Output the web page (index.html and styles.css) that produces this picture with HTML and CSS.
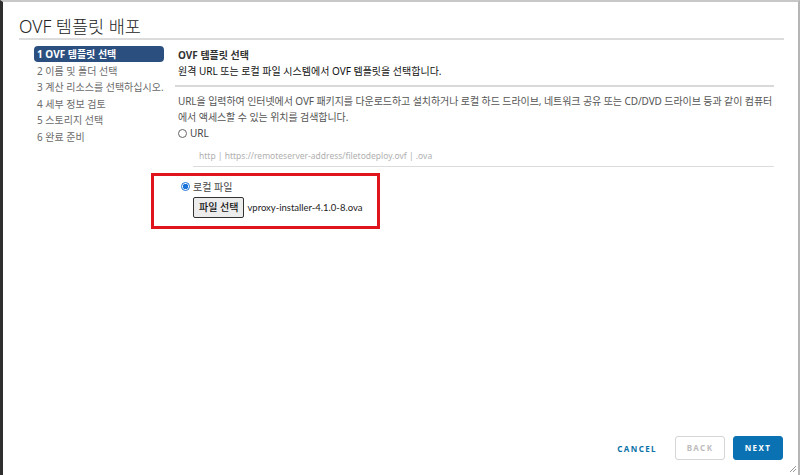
FILE: index.html
```html
<!DOCTYPE html>
<html lang="ko">
<head>
<meta charset="utf-8">
<link rel="stylesheet" href="styles.css">
</head>
<body>
<div class="screen">
  <div class="modal">
    <div class="header">
      <h1 class="title">OVF 템플릿 배포</h1>
    </div>
    <div class="main">
      <ul class="steps">
        <li class="step active">1 OVF 템플릿 선택</li>
        <li class="step">2 이름 및 폴더 선택</li>
        <li class="step">3 계산 리소스를 선택하십시오.</li>
        <li class="step">4 세부 정보 검토</li>
        <li class="step">5 스토리지 선택</li>
        <li class="step">6 완료 준비</li>
      </ul>
      <div class="content">
        <div class="intro">
          <div class="intro-title">OVF 템플릿 선택</div>
          <div class="intro-sub">원격 URL 또는 로컬 파일 시스템에서 OVF 템플릿을 선택합니다.</div>
        </div>
        <p class="desc">URL을 입력하여 인터넷에서 OVF 패키지를 다운로드하고 설치하거나 로컬 하드 드라이브, 네트워크 공유 또는 CD/DVD 드라이브 등과 같이 컴퓨터에서 액세스할 수 있는 위치를 검색합니다.</p>
        <label class="radio-row"><span class="radio"></span>URL</label>
        <div class="url-input">http | https://remoteserver-address/filetodeploy.ovf | .ova</div>
        <div class="highlight">
          <label class="radio-row local"><span class="radio checked"></span>로컬 파일</label>
          <div class="file-row">
            <span class="file-btn">파일 선택</span>
            <span class="file-name">vproxy-installer-4.1.0-8.ova</span>
          </div>
        </div>
      </div>
    </div>
    <div class="footer">
      <span class="btn-link">CANCEL</span>
      <span class="btn btn-outline">BACK</span>
      <span class="btn btn-primary">NEXT</span>
    </div>
    <div class="resize"></div>
  </div>
</div>
</body>
</html>
```
FILE: styles.css
```css
* { box-sizing: border-box; }
html, body { margin: 0; padding: 0; }
body {
  width: 800px;
  height: 475px;
  overflow: hidden;
  background: #fff;
  font-family: "Noto Sans", "Noto Sans CJK KR", sans-serif;
  color: #333;
}
.screen {
  width: 800px;
  height: 475px;
  border-left: 3px solid #2e2e2e;
  border-top: 2px solid #c8c8c8;
  border-right: 2px solid #b5b5b5;
  background: #fff;
}
.modal {
  position: relative;
  height: 100%;
  display: flex;
  flex-direction: column;
}
.header {
  margin: 0 14px 0 16px;
  border-bottom: 2px solid #dcdcdc;
  height: 38px;
  display: flex;
  align-items: flex-end;
  padding-bottom: 1px;
}
.title {
  margin: 0;
  font-size: 17.5px;
  font-weight: 300;
  line-height: 22px;
  color: #222;
}
.main {
  flex: 1;
  display: flex;
  padding-top: 6px;
}
.steps {
  list-style: none;
  margin: 0;
  padding: 0;
  margin-left: 31px;
  width: 130px;
}
.step {
  height: 16.5px;
  line-height: 16px;
  font-size: 10px;
  color: #6a6a6a;
  padding-left: 3px;
  white-space: nowrap;
}
.step.active {
  background: #2b4f7e;
  color: #fff;
  font-weight: 700;
  border-radius: 4px;
  height: 16px;
  margin-bottom: 0.5px;
}
.content {
  flex: 1;
  margin-left: 11px;
  margin-right: 24px;
  font-size: 10px;
  color: #333;
}
.intro {
  border-bottom: 2px solid #d9d9d9;
  padding: 1px 0 6px 3px;
}
.intro-title {
  font-weight: 700;
  line-height: 16px;
  color: #333;
}
.intro-sub {
  font-weight: 400;
  line-height: 16px;
  color: #111;
}
.desc {
  margin: 6px 0 0 3px;
  line-height: 16px;
  color: #555;
  letter-spacing: -0.08px;
}
.radio-row {
  display: flex;
  align-items: center;
  gap: 3px;
  height: 16px;
  margin-left: 3px;
  color: #444;
}
.radio {
  width: 9px;
  height: 9px;
  border: 1px solid #666;
  border-radius: 50%;
  display: inline-block;
  background: #fff;
}
.radio.checked {
  border-color: #1a73d9;
  background: radial-gradient(circle, #1a73d9 0 2.5px, #fff 3px);
}
.url-input {
  margin: 8px 0 0 18px;
  border-bottom: 1px solid #dcdcdc;
  font-size: 8.5px;
  color: #b0b0b0;
  height: 18px;
  line-height: 14px;
  padding-left: 6px;
}
.highlight {
  margin: 6px 0 0 -24px;
  width: 229px;
  height: 56px;
  border: 3px solid #e0141d;
  padding: 2px 0 0 24px;
}
.radio-row.local { margin-left: 3px; }
.file-row {
  display: flex;
  align-items: center;
  margin: 3px 0 0 15px;
  gap: 3px;
}
.file-btn {
  display: inline-block;
  height: 21px;
  line-height: 19px;
  padding: 0 5px;
  border: 1px solid #333;
  border-radius: 2px;
  background: #ececec;
  font-size: 10px;
  font-weight: 500;
  color: #111;
}
.file-name {
  font-family: "Lato", "Noto Sans", sans-serif;
  font-size: 9.5px;
  color: #222;
}
.footer {
  display: flex;
  justify-content: flex-end;
  align-items: center;
  gap: 8px;
  padding: 0 15px 15px 0;
}
.btn-link, .btn {
  font-size: 8px;
  font-weight: 700;
  letter-spacing: 1.4px;
  text-align: center;
}
.btn-link {
  color: #0a72a8;
  margin-right: 10px;
}
.btn {
  width: 50px;
  height: 24px;
  line-height: 22px;
  border-radius: 3px;
}
.btn-outline {
  border: 1px solid #d5d5d5;
  color: #bdbdbd;
}
.btn-primary {
  background: #0a72b3;
  border: 1px solid #0a72b3;
  color: #fff;
}
.resize {
  position: absolute;
  right: 2px;
  bottom: 3px;
  width: 6px;
  height: 6px;
  background: linear-gradient(135deg, transparent 0 45%, #999 45% 55%, transparent 55% 70%, #999 70% 80%, transparent 80%);
}
```
